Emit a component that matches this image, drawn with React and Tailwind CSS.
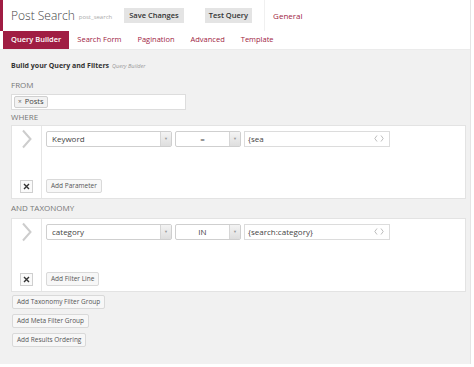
const crimson = "text-[#a01d43]";

function Select({ label, width, center = false }) {
  return (
    <div
      className={`flex h-[16px] items-stretch rounded-[2px] border border-[#cfcfcf] bg-white ${width}`}
    >
      <div
        className={`flex flex-1 items-center px-[5px] text-[8px] text-[#444] ${center ? "justify-center" : ""}`}
      >
        {label}
      </div>
      <div className="flex w-[11px] items-center justify-center border-l border-[#d6d6d6] bg-gradient-to-b from-[#f4f4f4] to-[#dedede]">
        <span className="text-[4px] leading-none text-[#999]">▼</span>
      </div>
    </div>
  );
}

function ValueInput({ value }) {
  return (
    <div className="flex h-[16px] w-[146px] items-center justify-between border border-[#dcdcdc] bg-white px-[3px] text-[8px] text-[#444]">
      <span>{value}</span>
      <svg width="10" height="7" viewBox="0 0 10 7" className="mr-[2px]">
        <path d="M3 0.5 L0.8 3.5 L3 6.5 M7 0.5 L9.2 3.5 L7 6.5" fill="none" stroke="#b5b5b5" strokeWidth="0.9" />
      </svg>
    </div>
  );
}

function SmallButton({ children }) {
  return (
    <div className="flex h-[14px] items-center rounded-[2px] border border-[#d9d9d9] bg-[#f7f7f7] px-[4px] text-[6.5px] text-[#555]">
      {children}
    </div>
  );
}

function FilterPanel({ field, op, value, addLabel }) {
  return (
    <div className="ml-[11px] flex h-[74px] w-[455px] border border-[#e3e3e3] bg-white">
      <div className="flex w-[30px] flex-col items-center justify-between border-r border-[#e6e6e6] pb-[5px] pt-[3px]">
        <svg width="12" height="20" viewBox="0 0 12 20">
          <path d="M2 1.5 L9.5 10 L2 18.5" fill="none" stroke="#cdcdcd" strokeWidth="2" />
        </svg>
        <div className="flex h-[13px] w-[13px] items-center justify-center border border-[#cfcfcf] bg-[#fafafa]">
          <svg width="7" height="7" viewBox="0 0 7 7">
            <path d="M1 1 L6 6 M6 1 L1 6" stroke="#333" strokeWidth="1.4" />
          </svg>
        </div>
      </div>
      <div className="flex flex-1 flex-col justify-between pb-[5px] pl-[4px] pt-[5px]">
        <div className="flex gap-[3px]">
          <Select label={field} width="w-[126px]" />
          <Select label={op} width="w-[66px]" center />
          <ValueInput value={value} />
        </div>
        <div className="flex">
          <SmallButton>{addLabel}</SmallButton>
        </div>
      </div>
    </div>
  );
}

export default function App() {
  return (
    <div
      className="h-[367px] w-[474px] bg-white"
      style={{ fontFamily: '"Open Sans", "Noto Sans", sans-serif' }}
    >
      <div className="w-[471px] border-r border-[#e4e4e4]">
        <div className="flex h-[31px] items-center border-l-[3px] border-[#a01d43] bg-white pl-[8px]">
          <span className="text-[12px] font-light text-[#444]">Post Search</span>
          <span className="ml-[4px] mt-[3px] text-[6px] text-[#aaa]">post_search</span>
          <div className="ml-[12px] flex h-[15px] items-center bg-[#e4e4e4] px-[5px] text-[7.5px] font-semibold text-[#333]">
            Save Changes
          </div>
          <div className="ml-[21px] flex h-[15px] items-center bg-[#e4e4e4] px-[4px] text-[7.5px] font-semibold text-[#333]">
            Test Query
          </div>
          <div className="ml-[12px] h-[31px] w-px bg-[#f0f0f0]" />
          <span className={`ml-[8px] text-[8px] ${crimson}`}>General</span>
        </div>
        <div className="flex h-[19px] items-stretch border-b border-[#ebebeb] bg-white pl-[3px] text-[7.5px]">
          <div className="flex items-center bg-[#a01d43] px-[8px] font-semibold text-white">
            Query Builder
          </div>
          <div className={`flex items-center px-[8px] ${crimson}`}>Search Form</div>
          <div className={`flex items-center px-[8px] ${crimson}`}>Pagination</div>
          <div className={`flex items-center px-[8px] ${crimson}`}>Advanced</div>
          <div className={`flex items-center px-[8px] ${crimson}`}>Template</div>
        </div>
        <div className="flex h-[314px] flex-col bg-[#f1f1f1]">
          <div className="ml-[11px] mt-[11px] flex items-baseline gap-[3px]">
            <span className="text-[7px] font-bold text-[#333]">Build your Query and Filters</span>
            <span className="text-[5.5px] italic text-[#999]">Query Builder</span>
          </div>
          <div className="ml-[11px] mt-[7px] text-[8px] uppercase leading-[12px] text-[#777]">From</div>
          <div className="ml-[11px] mt-[3px] flex h-[16px] w-[175px] items-center border border-[#dddddd] bg-white px-[2px]">
            <div className="flex h-[12px] items-center gap-[3px] rounded-[2px] border border-[#cfcfcf] bg-[#f2f2f2] px-[3px] text-[7.5px] text-[#444]">
              <span className="text-[6.5px] text-[#666]">×</span>
              <span>Posts</span>
            </div>
          </div>
          <div className="ml-[11px] mt-[1px] text-[8px] uppercase leading-[12px] text-[#777]">Where</div>
          <div className="mt-[2px]">
            <FilterPanel field="Keyword" op="=" value="{sea" addLabel="Add Parameter" />
          </div>
          <div className="ml-[11px] mt-[3px] text-[8px] uppercase leading-[12px] text-[#777]">And Taxonomy</div>
          <div className="mt-[4px]">
            <FilterPanel field="category" op="IN" value="{search:category}" addLabel="Add Filter Line" />
          </div>
          <div className="ml-[12px] mt-[3px] flex flex-col items-start gap-[5px]">
            <SmallButton>Add Taxonomy Filter Group</SmallButton>
            <SmallButton>Add Meta Filter Group</SmallButton>
            <SmallButton>Add Results Ordering</SmallButton>
          </div>
        </div>
      </div>
    </div>
  );
}
